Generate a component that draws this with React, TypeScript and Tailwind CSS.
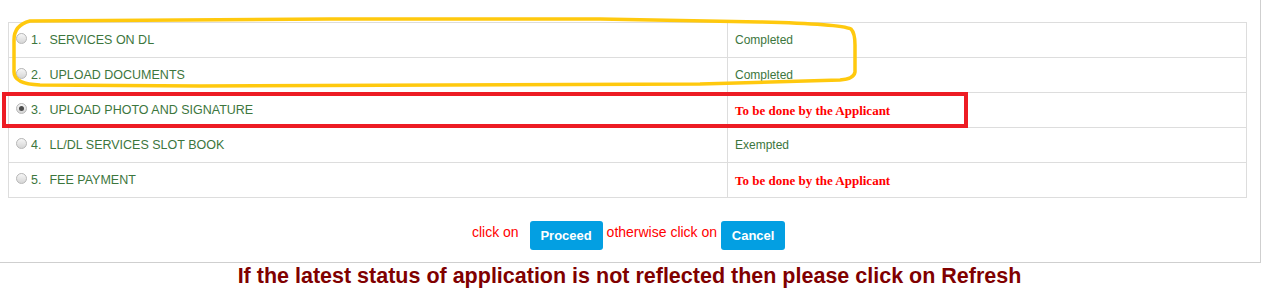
import React from "react";

type Step = {
  no: number;
  title: string;
  status: string;
  pending?: boolean;
  checked?: boolean;
};

const steps: Step[] = [
  { no: 1, title: "SERVICES ON DL", status: "Completed" },
  { no: 2, title: "UPLOAD DOCUMENTS", status: "Completed" },
  { no: 3, title: "UPLOAD PHOTO AND SIGNATURE", status: "To be done by the Applicant", pending: true, checked: true },
  { no: 4, title: "LL/DL SERVICES SLOT BOOK", status: "Exempted" },
  { no: 5, title: "FEE PAYMENT", status: "To be done by the Applicant", pending: true },
];

const Radio = ({ checked }: { checked?: boolean }) => (
  <span className="inline-flex w-[11px] h-[11px] rounded-full border border-[#b8b8b8] bg-gradient-to-b from-[#f6f6f6] to-[#d6d6d6] items-center justify-center mt-[-3px] shrink-0">
    {checked && <span className="w-[5px] h-[5px] rounded-full bg-[#4a4a4a]" />}
  </span>
);

const App = () => {
  return (
    <div className="relative w-[1263px] h-[295px] bg-white overflow-hidden" style={{ fontFamily: '"Liberation Sans", Arial, sans-serif' }}>
      {/* main panel */}
      <div className="w-[1261px] h-[263px] border-r border-b border-[#cfcfcf] pt-[22px] pl-[8px]">
        <table className="w-[1239px] border-collapse border border-[#dddddd]">
          <tbody>
            {steps.map((s) => (
              <tr key={s.no} className="h-[35px]">
                <td className="w-[719px] border border-[#dddddd] pl-[7px] p-0">
                  <div className="flex items-center text-[12.5px] text-[#3c763d]">
                    <Radio checked={s.checked} />
                    <span className="ml-[4px]">{s.no}.</span>
                    <span className="ml-[8px]">{s.title}</span>
                  </div>
                </td>
                <td className="border border-[#dddddd] pl-[7px] p-0">
                  {s.pending ? (
                    <span className="text-[13px] font-bold text-[#ff0000]" style={{ fontFamily: '"Liberation Serif", "DejaVu Serif", serif' }}>
                      {s.status}
                    </span>
                  ) : (
                    <span className="relative top-[-1px] text-[12px] text-[#3c763d]">{s.status}</span>
                  )}
                </td>
              </tr>
            ))}
          </tbody>
        </table>

        <div className="flex justify-center items-center mt-[23px] pr-[11px]">
          <span className="text-[14px] text-[#ff0000] mt-[-6px] mr-[11px]">click on</span>
          <button className="w-[73px] h-[29px] rounded-[3px] bg-[#039fe2] text-white text-[13px] font-bold">Proceed</button>
          <span className="text-[14px] text-[#ff0000] mt-[-6px] mx-[4px]">otherwise click on</span>
          <button className="w-[64px] h-[29px] rounded-[3px] bg-[#039fe2] text-white text-[13px] font-bold">Cancel</button>
        </div>
      </div>

      <div className="text-center text-[21.5px] leading-[24px] font-bold text-[#800000] pt-[1px] pr-[4px]">
        If the latest status of application is not reflected then please click on Refresh
      </div>

      {/* annotations */}
      <svg className="absolute left-0 top-0 pointer-events-none" width="1263" height="295">
        <path
          d="M 30 21 L 330 19 L 600 19 L 760 22 Q 840 24 851 29 Q 855 33 855 45 L 855 72 Q 854 79 840 80 L 700 84 L 200 86 L 40 85 Q 14 84 14 72 L 14 40 Q 14 25 30 21 Z"
          fill="none"
          stroke="#ffc90e"
          strokeWidth="3.5"
        />
      </svg>
      <div className="absolute left-[2px] top-[92px] w-[966px] h-[36px] border-[4px] border-[#ed1c24]" />
    </div>
  );
};

export default App;
